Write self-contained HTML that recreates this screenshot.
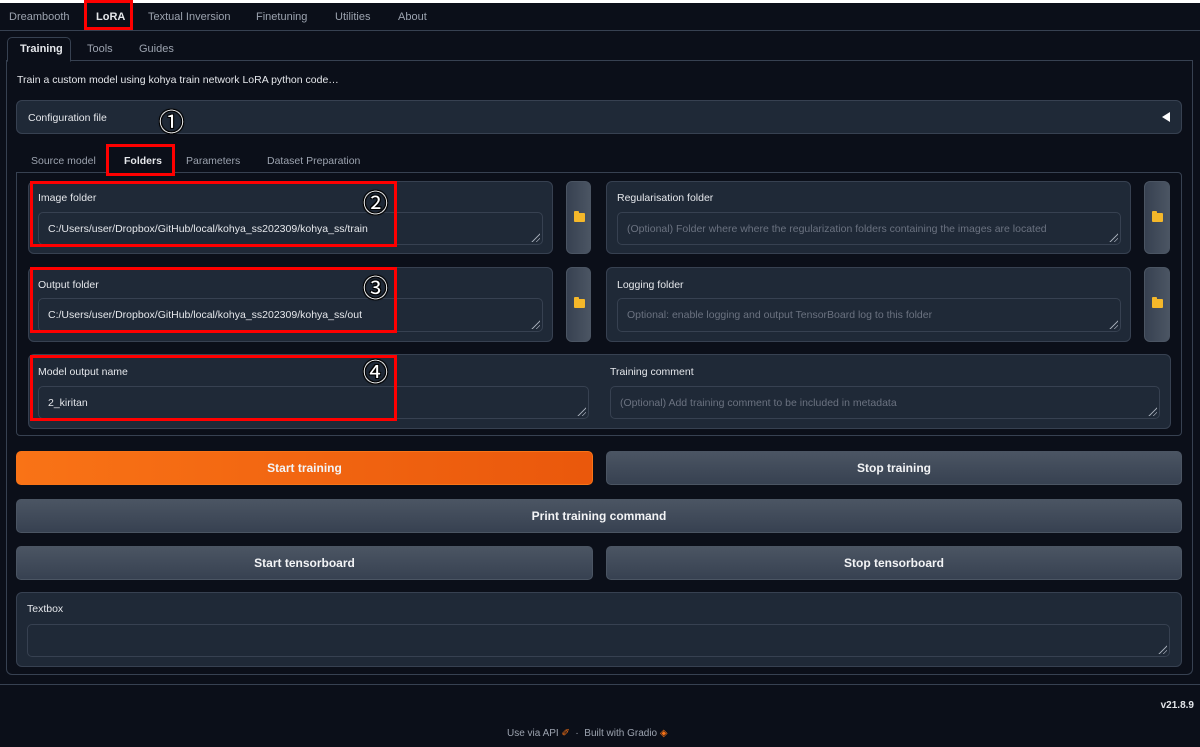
<!DOCTYPE html>
<html><head><meta charset="utf-8"><style>
*{box-sizing:border-box;margin:0;padding:0}
body{width:1200px;height:747px;background:#0b0f19;font-family:"Liberation Sans","Noto Sans CJK JP",sans-serif;color:#e5e7eb;position:relative;overflow:hidden;font-size:11px}
.a{position:absolute}
.t{position:absolute;white-space:nowrap}
.blk{position:absolute;background:#1f2937;border:1px solid #374151;border-radius:6px}
.ta{position:absolute;background:#1f2937;border:1px solid #374151;border-radius:5px;padding:0 9px;display:flex;align-items:center;font-size:10.5px;color:#e5e7eb}
.ta.ph{color:#6b7280}
.ta:after{content:"";position:absolute;right:2px;bottom:2px;width:10px;height:10px;background:repeating-linear-gradient(135deg,transparent 0 2px,#9ca3af 2px 3px);clip-path:polygon(100% 0,100% 100%,0 100%)}
.lbl{position:absolute;font-size:10.5px;color:#e5e7eb}
.btn{position:absolute;background:linear-gradient(#4b5563,#374151);border:1px solid #4b5563;border-radius:5px;display:flex;align-items:center;justify-content:center;font-weight:bold;font-size:12px;color:#f3f4f6}
.fb{position:absolute;background:linear-gradient(90deg,#374151,#4b5563);border:1px solid #4b5563;border-radius:6px}
.fb:before{content:"";position:absolute;left:7px;top:29px;width:5px;height:3px;background:#f5b82a;border-radius:1px 1px 0 0}
.fb:after{content:"";position:absolute;left:7px;top:31px;width:11px;height:9px;background:#f5b82a;border-radius:1px}
.red{position:absolute;border:3px solid #f00}
.num{position:absolute;font-size:25px;color:#fff;text-shadow:-1px -1px 0 #000,1px -1px 0 #000,-1px 1px 0 #000,1px 1px 0 #000,0 0 2px #000,0 0 1px #fff;line-height:1}
</style></head><body>
<div class="a" style="left:0;top:0;width:1200px;height:3px;background:#fff"></div>
<div class="a" style="left:0;top:30px;width:1200px;height:1px;background:#374151"></div>
<div class="t" style="left:9px;top:11px;color:#9ca3af">Dreambooth</div>
<div class="t" style="left:96px;top:11px;font-weight:bold">LoRA</div>
<div class="t" style="left:148px;top:11px;color:#9ca3af">Textual Inversion</div>
<div class="t" style="left:256px;top:11px;color:#9ca3af">Finetuning</div>
<div class="t" style="left:335px;top:11px;color:#9ca3af">Utilities</div>
<div class="t" style="left:398px;top:11px;color:#9ca3af">About</div>
<div class="red" style="left:84px;top:0;width:49px;height:30px"></div>

<div class="a" style="left:6px;top:60px;width:1187px;height:615px;border:1px solid #374151;border-top:none;border-radius:0 0 6px 6px"></div>
<div class="a" style="left:6px;top:60px;width:1187px;height:1px;background:#374151"></div>
<div class="a" style="left:7px;top:37px;width:64px;height:25px;border:1px solid #374151;border-bottom:1px solid #0b0f19;border-radius:5px 5px 0 0;background:#0b0f19"></div>
<div class="t" style="left:20px;top:43px;font-weight:bold">Training</div>
<div class="t" style="left:87px;top:43px;color:#9ca3af">Tools</div>
<div class="t" style="left:139px;top:43px;color:#9ca3af">Guides</div>
<div class="t" style="left:17px;top:74px;font-size:10.5px">Train a custom model using kohya train network LoRA python code…</div>

<div class="blk" style="left:16px;top:100px;width:1166px;height:34px"></div>
<div class="t" style="left:28px;top:112px;font-size:10.5px">Configuration file</div>
<div class="a" style="left:1162px;top:112px;width:0;height:0;border-top:5px solid transparent;border-bottom:5px solid transparent;border-right:8px solid #fff"></div>

<div class="t" style="left:31px;top:155px;color:#9ca3af;font-size:10.5px">Source model</div>
<div class="t" style="left:186px;top:155px;color:#9ca3af;font-size:10.5px">Parameters</div>
<div class="t" style="left:267px;top:155px;color:#9ca3af;font-size:10.5px">Dataset Preparation</div>
<div class="a" style="left:16px;top:172px;width:1166px;height:264px;border:1px solid #374151;border-radius:0 4px 4px 4px"></div>
<div class="red" style="left:106px;top:144px;width:69px;height:32px;background:#0b0f19"></div>
<div class="t" style="left:124px;top:155px;font-weight:bold;font-size:10.5px">Folders</div>

<div class="blk" style="left:28px;top:181px;width:525px;height:73px"></div>
<div class="lbl" style="left:38px;top:192px">Image folder</div>
<div class="ta" style="left:38px;top:212px;width:505px;height:33px">C:/Users/user/Dropbox/GitHub/local/kohya_ss202309/kohya_ss/train</div>
<div class="fb" style="left:566px;top:181px;width:25px;height:73px"></div>
<div class="blk" style="left:606px;top:181px;width:525px;height:73px"></div>
<div class="lbl" style="left:617px;top:192px">Regularisation folder</div>
<div class="ta ph" style="left:617px;top:212px;width:504px;height:33px">(Optional) Folder where where the regularization folders containing the images are located</div>
<div class="fb" style="left:1144px;top:181px;width:26px;height:73px"></div>

<div class="blk" style="left:28px;top:267px;width:525px;height:75px"></div>
<div class="lbl" style="left:38px;top:279px">Output folder</div>
<div class="ta" style="left:38px;top:298px;width:505px;height:34px">C:/Users/user/Dropbox/GitHub/local/kohya_ss202309/kohya_ss/out</div>
<div class="fb" style="left:566px;top:267px;width:25px;height:75px"></div>
<div class="blk" style="left:606px;top:267px;width:525px;height:75px"></div>
<div class="lbl" style="left:617px;top:279px">Logging folder</div>
<div class="ta ph" style="left:617px;top:298px;width:504px;height:34px">Optional: enable logging and output TensorBoard log to this folder</div>
<div class="fb" style="left:1144px;top:267px;width:26px;height:75px"></div>

<div class="blk" style="left:28px;top:354px;width:1143px;height:75px"></div>
<div class="lbl" style="left:38px;top:366px">Model output name</div>
<div class="ta" style="left:38px;top:386px;width:551px;height:33px">2_kiritan</div>
<div class="lbl" style="left:610px;top:366px">Training comment</div>
<div class="ta ph" style="left:610px;top:386px;width:550px;height:33px">(Optional) Add training comment to be included in metadata</div>

<div class="red" style="left:30px;top:181px;width:367px;height:66px"></div>
<div class="red" style="left:30px;top:267px;width:367px;height:66px"></div>
<div class="red" style="left:30px;top:355px;width:367px;height:66px"></div>
<div class="num" style="left:159px;top:111px">①</div>
<div class="num" style="left:363px;top:192px">②</div>
<div class="num" style="left:363px;top:277px">③</div>
<div class="num" style="left:363px;top:361px">④</div>

<div class="btn" style="left:16px;top:451px;width:577px;height:34px;background:linear-gradient(90deg,#f97316,#ea580c);border-color:#f97316">Start training</div>
<div class="btn" style="left:606px;top:451px;width:576px;height:34px">Stop training</div>
<div class="btn" style="left:16px;top:499px;width:1166px;height:34px">Print training command</div>
<div class="btn" style="left:16px;top:546px;width:577px;height:34px">Start tensorboard</div>
<div class="btn" style="left:606px;top:546px;width:576px;height:34px">Stop tensorboard</div>

<div class="blk" style="left:16px;top:592px;width:1166px;height:75px"></div>
<div class="lbl" style="left:27px;top:603px">Textbox</div>
<div class="ta" style="left:27px;top:624px;width:1143px;height:33px"></div>

<div class="a" style="left:0;top:684px;width:1200px;height:1px;background:#374151"></div>
<div class="t" style="right:6px;top:700px;font-weight:bold;font-size:10px">v21.8.9</div>
<div class="t" style="left:507px;top:728px;color:#9ca3af;font-size:10px">Use via API <span style="color:#f97316">✐</span> &nbsp;·&nbsp; Built with Gradio <span style="color:#f97316">◈</span></div>
</body></html>
